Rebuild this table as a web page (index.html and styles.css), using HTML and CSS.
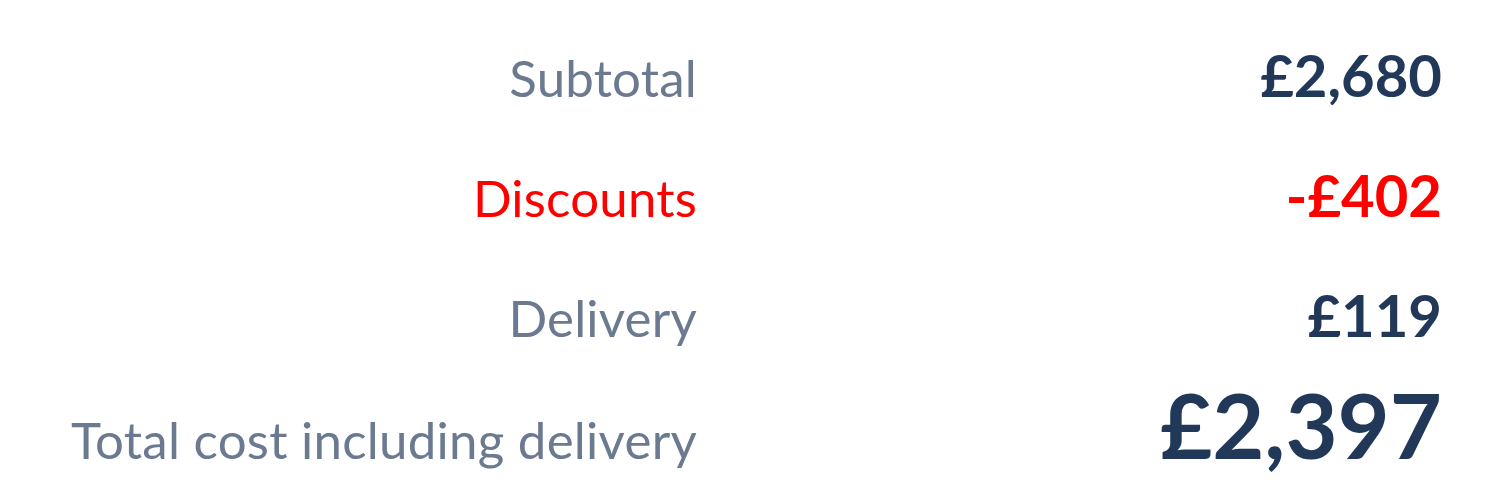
FILE: index.html
```html
<!DOCTYPE html>
<html lang="en">
<head>
<meta charset="utf-8">
<title>Order summary</title>
<link rel="stylesheet" href="styles.css">
</head>
<body>
<div class="summary">
  <div class="row">
    <span class="label">Subtotal</span>
    <span class="value">£2,680</span>
  </div>
  <div class="row discount">
    <span class="label">Discounts</span>
    <span class="value">-£402</span>
  </div>
  <div class="row">
    <span class="label">Delivery</span>
    <span class="value">£119</span>
  </div>
  <div class="row total">
    <span class="label">Total cost including delivery</span>
    <span class="value">£2,397</span>
  </div>
</div>
</body>
</html>
```
FILE: styles.css
```css
html, body {
  margin: 0;
  padding: 0;
  background: #ffffff;
}
body {
  font-family: Lato, "Open Sans", sans-serif;
  width: 1500px;
  height: 487px;
  overflow: hidden;
}
.summary {
  padding: 15px 58px 0 0;
  display: flex;
  flex-direction: column;
}
.row {
  display: grid;
  grid-template-columns: 697px 1fr;
  align-items: baseline;
  line-height: 120px;
  height: 120px;
}
.label {
  text-align: right;
  color: #6b7a90;
  font-size: 51px;
  letter-spacing: 0.2px;
}
.value {
  text-align: right;
  color: #223858;
  font-size: 58px;
  font-weight: 700;
}
.discount .label,
.discount .value {
  color: #ff0000;
}
.total {
  line-height: 98px;
}
.total .label {
  letter-spacing: 0.25px;
}
.total .value {
  font-size: 90px;
}
```
